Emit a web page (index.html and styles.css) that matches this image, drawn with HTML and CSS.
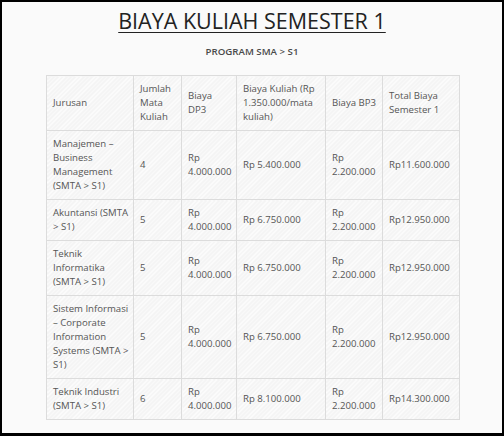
FILE: index.html
```html
<!DOCTYPE html>
<html>
<head>
<meta charset="utf-8">
<link rel="stylesheet" href="styles.css">
</head>
<body>
<div class="page">
  <h1 class="title">BIAYA KULIAH SEMESTER 1</h1>
  <p class="subtitle">PROGRAM SMA &gt; S1</p>
  <table class="fees">
    <colgroup>
      <col class="c1"><col class="c2"><col class="c3"><col class="c4"><col class="c5"><col class="c6">
    </colgroup>
    <tbody>
      <tr>
        <td>Jurusan</td>
        <td>Jumlah Mata Kuliah</td>
        <td>Biaya DP3</td>
        <td>Biaya Kuliah (Rp 1.350.000/mata kuliah)</td>
        <td>Biaya BP3</td>
        <td>Total Biaya Semester 1</td>
      </tr>
      <tr>
        <td>Manajemen – Business Management (SMTA &gt; S1)</td>
        <td>4</td>
        <td>Rp 4.000.000</td>
        <td>Rp 5.400.000</td>
        <td>Rp 2.200.000</td>
        <td>Rp11.600.000</td>
      </tr>
      <tr>
        <td>Akuntansi (SMTA &gt; S1)</td>
        <td>5</td>
        <td>Rp 4.000.000</td>
        <td>Rp 6.750.000</td>
        <td>Rp 2.200.000</td>
        <td>Rp12.950.000</td>
      </tr>
      <tr>
        <td>Teknik Informatika (SMTA &gt; S1)</td>
        <td>5</td>
        <td>Rp 4.000.000</td>
        <td>Rp 6.750.000</td>
        <td>Rp 2.200.000</td>
        <td>Rp12.950.000</td>
      </tr>
      <tr>
        <td>Sistem Informasi – Corporate Information Systems (SMTA &gt; S1)</td>
        <td>5</td>
        <td>Rp 4.000.000</td>
        <td>Rp 6.750.000</td>
        <td>Rp 2.200.000</td>
        <td>Rp12.950.000</td>
      </tr>
      <tr>
        <td>Teknik Industri (SMTA &gt; S1)</td>
        <td>6</td>
        <td>Rp 4.000.000</td>
        <td>Rp 8.100.000</td>
        <td>Rp 2.200.000</td>
        <td>Rp14.300.000</td>
      </tr>
    </tbody>
  </table>
</div>
</body>
</html>
```

FILE: styles.css
```css
html, body {
  margin: 0;
  padding: 0;
  background: #000;
}
body {
  padding: 2px 2px 3px 2px;
  font-family: "Open Sans", "Liberation Sans", sans-serif;
}
.page {
  background: #fafafa;
  height: 431px;
  overflow: hidden;
  padding-top: 6px;
  box-sizing: border-box;
}
.title {
  margin: 0;
  text-align: center;
  font-size: 21.5px;
  line-height: 25px;
  font-weight: 400;
  color: #222;
  text-decoration: underline;
  text-decoration-thickness: 1px;
  text-underline-offset: 3px;
}
.subtitle {
  margin: 12px 0 0;
  text-align: center;
  font-size: 9.7px;
  line-height: 14px;
  font-weight: 600;
  color: #4a4a4a;
}
.fees {
  margin: 16px 0 0 44px;
  width: 413px;
  table-layout: fixed;
  border-collapse: collapse;
  font-size: 9.6px;
  line-height: 14px;
  color: #555;
}
.c1 { width: 87px; }
.c2 { width: 48px; }
.c3 { width: 55px; }
.c4 { width: 89px; }
.c5 { width: 57px; }
.c6 { width: 77px; }
.fees td {
  border: 1px solid #dcdcdc;
  padding: 6px 4px 6px 6px;
  vertical-align: middle;
  background-color: #f4f4f4;
  background-image: repeating-linear-gradient(135deg, rgba(255,255,255,0.9) 0 1px, rgba(255,255,255,0) 1px 3px);
}
```
